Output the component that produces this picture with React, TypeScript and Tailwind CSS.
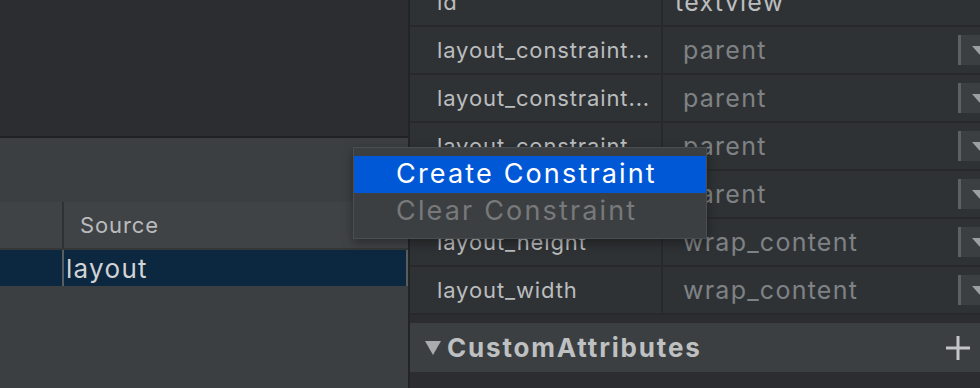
import React from 'react';

type Row = { label: string; value: string; bright?: boolean; dropdown?: boolean };

const rows: Row[] = [
  { label: 'id', value: 'textview', bright: true },
  { label: 'layout_constraint...', value: 'parent', dropdown: true },
  { label: 'layout_constraint...', value: 'parent', dropdown: true },
  { label: 'layout_constraint...', value: 'parent', dropdown: true },
  { label: 'layout_constraint...', value: 'parent', dropdown: true },
  { label: 'layout_height', value: 'wrap_content', dropdown: true },
  { label: 'layout_width', value: 'wrap_content', dropdown: true },
];

function DropTriangle() {
  return (
    <svg width="16" height="9" viewBox="0 0 16 9" className="ml-[11px] shrink-0">
      <polygon points="0,0 16,0 8,9" fill="#9c9fa2" />
    </svg>
  );
}

function AttrRow({ row, first }: { row: Row; first?: boolean }) {
  return (
    <div
      className={`flex h-[48px] shrink-0 border-b-2 border-[#27292b] bg-[#2f3234] ${first ? '-mt-[21px]' : ''}`}
    >
      <div className="flex w-[253px] items-center border-r-2 border-[#27292b] pl-[27px] text-[#bbbdbf]">
        {row.label}
      </div>
      <div className="flex flex-1 items-center">
        <span
          className={`flex-1 pt-[2px] text-[25px] tracking-[0.05em] ${row.bright ? 'pl-[12px] text-[#bbbdbf]' : 'pl-[20px] text-[#7f8285]'}`}
        >
          {row.value}
        </span>
        {row.dropdown && (
          <div className="flex h-[30px] w-[22px] items-center overflow-hidden border-l-[3px] border-[#5e6163] bg-[#3c3f41]">
            <DropTriangle />
          </div>
        )}
      </div>
    </div>
  );
}

export default function App() {
  return (
    <div className="relative flex h-[388px] w-[980px] overflow-hidden bg-[#2b2d30] font-['Inter',sans-serif] text-[22px] tracking-[0.04em]">
      {/* left panel */}
      <div className="flex w-[408px] shrink-0 flex-col">
        <div className="h-[136px] bg-[#2b2d30]" />
        <div className="h-[2px] bg-[#1f2123]" />
        <div className="flex-1 bg-[#3c3f41] pt-[64px]">
          <div className="flex h-[46px] bg-[#404346]">
            <div className="w-[64px] border-r-2 border-[#2f3133]" />
            <div className="flex items-center pl-[16px] text-[#b9bbbd]">Source</div>
          </div>
          <div className="h-[2px] bg-[#343638]" />
          <div className="flex h-[36px] border-r-2 border-[#5a5d60] bg-[#0c2840]">
            <div className="w-[64px] border-r-2 border-[#5a5d60]" />
            <div className="flex items-center pl-[2px] text-[26px] tracking-[0.05em] text-[#d2d3d4]">layout</div>
          </div>
        </div>
      </div>
      <div className="w-[2px] shrink-0 bg-[#222426]" />
      {/* right panel */}
      <div className="flex flex-1 flex-col bg-[#2b2d30]">
        {rows.map((r, i) => (
          <AttrRow key={i} row={r} first={i === 0} />
        ))}
        <div className="mt-[8px] flex h-[49px] shrink-0 items-center bg-[#3c3f41] pl-[15px] pr-[10px]">
          <svg width="16" height="14" viewBox="0 0 16 14">
            <polygon points="0,0 16,0 8,14" fill="#a9abad" />
          </svg>
          <span className="ml-[6px] flex-1 text-[26px] font-bold tracking-[0.07em] text-[#bec0c2]">CustomAttributes</span>
          <svg width="24" height="24" viewBox="0 0 24 24">
            <rect x="10.5" y="0" width="3" height="24" fill="#c3c5c7" />
            <rect x="0" y="10.5" width="24" height="3" fill="#c3c5c7" />
          </svg>
        </div>
      </div>

      {/* context menu */}
      <div className="absolute left-[353px] top-[147px] w-[354px] border border-[#4b4e50] bg-[#3c3f41] py-[8px] text-[27px] tracking-[0.08em] shadow-[0_4px_10px_rgba(0,0,0,0.35)]">
        <div className="flex h-[37px] items-center bg-[#0058d6] pl-[42px] text-white">Create Constraint</div>
        <div className="flex h-[37px] items-center pl-[42px] text-[#77797b]">Clear Constraint</div>
      </div>
    </div>
  );
}
